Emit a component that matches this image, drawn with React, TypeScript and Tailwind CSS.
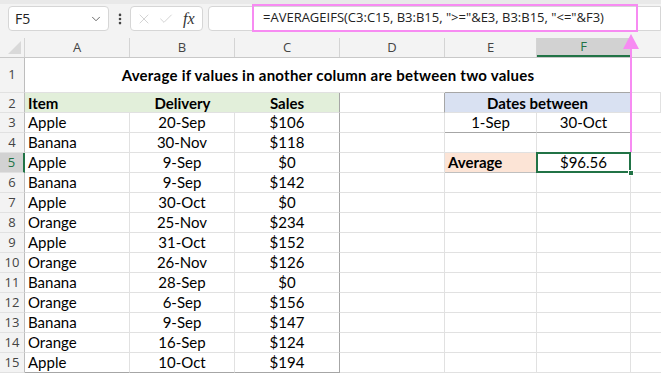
import React from 'react'
import { ChevronDown, EllipsisVertical, X, Check } from 'lucide-react'

const data = [
  ['Apple', '20-Sep', '$106'],
  ['Banana', '30-Nov', '$118'],
  ['Apple', '9-Sep', '$0'],
  ['Banana', '9-Sep', '$142'],
  ['Apple', '30-Oct', '$0'],
  ['Orange', '25-Nov', '$234'],
  ['Apple', '31-Oct', '$152'],
  ['Orange', '26-Nov', '$126'],
  ['Banana', '28-Sep', '$0'],
  ['Orange', '6-Sep', '$156'],
  ['Banana', '9-Sep', '$147'],
  ['Orange', '16-Sep', '$124'],
  ['Apple', '10-Oct', '$194'],
]

const RowHead = ({ n, active }: { n: number; active?: boolean }) => (
  <div
    className={
      active
        ? 'w-[25px] shrink-0 h-full flex items-center justify-center border-b border-[#e1e1e1] border-r-2 border-r-[#217346] bg-[#d2d2d2] text-[#217346] text-[13px] font-["Open_Sans",sans-serif]'
        : 'w-[25px] shrink-0 h-full flex items-center justify-center border-b border-[#e1e1e1] border-r border-r-[#bdbdbd] bg-[#f3f3f3] text-[#444] text-[13px] font-["Open_Sans",sans-serif]'
    }
  >
    {n}
  </div>
)

const Toolbar = () => (
  <div className="h-[38px] bg-[#f3f3f3] border-t-4 border-[#e9e9e9] flex items-start pt-[2px] pl-2 font-['Open_Sans',sans-serif]">
    <div className="w-[101px] h-[25px] bg-white border border-[#d6d6d6] rounded-[4px] flex items-center justify-between pl-[6px] pr-[5px]">
      <span className="text-[14px] text-[#222]">F5</span>
      <ChevronDown size={14} strokeWidth={1.5} className="text-[#555]" />
    </div>
    <div className="w-[21px] h-[25px] flex items-center justify-center">
      <EllipsisVertical size={14} strokeWidth={2.5} className="text-[#444]" />
    </div>
    <div className="w-[73px] h-[25px] bg-white border border-[#d6d6d6] rounded-[4px] flex items-center pl-[5px] gap-[6px]">
      <X size={16} strokeWidth={1} className="text-[#bdbdbd]" />
      <Check size={16} strokeWidth={1} className="text-[#bdbdbd]" />
      <span className="ml-[3px] text-[16px] italic text-[#333] font-['Liberation_Serif',serif]">fx</span>
    </div>
    <div className="ml-[5px] flex-1 h-[25px] bg-white border border-[#d6d6d6] rounded-l-[4px] flex items-center">
      <div className="ml-[43px] w-[386px] h-[28px] -mt-px border-2 border-[#f78bf2] flex items-center pl-[9px] text-[13px] text-[#222] whitespace-nowrap">
        =AVERAGEIFS(C3:C15, B3:B15, "&gt;="&amp;E3, B3:B15, "&lt;="&amp;F3)
      </div>
    </div>
  </div>
)

const ColHeads = () => (
  <div className="h-[20px] flex bg-[#f3f3f3] border-b border-[#c8c8c8] text-[13px] text-[#444] font-['Open_Sans',sans-serif]">
    <div className="w-[25px] shrink-0 border-r border-[#d4d4d4] relative">
      <div className="absolute right-[3px] bottom-[3px] w-0 h-0 border-l-[13px] border-l-transparent border-b-[13px] border-b-[#d9d9d9]" />
    </div>
    <div className="w-[105px] shrink-0 border-r border-[#d4d4d4] flex items-center justify-center">A</div>
    <div className="w-[105px] shrink-0 border-r border-[#d4d4d4] flex items-center justify-center">B</div>
    <div className="w-[105px] shrink-0 border-r border-[#d4d4d4] flex items-center justify-center">C</div>
    <div className="w-[105px] shrink-0 border-r border-[#d4d4d4] flex items-center justify-center">D</div>
    <div className="w-[92px] shrink-0 border-r border-[#d4d4d4] flex items-center justify-center">E</div>
    <div className="w-[94px] shrink-0 border-r border-[#d4d4d4] flex items-center justify-center bg-[#d2d2d2] text-[#217346] border-b-2 border-b-[#217346]">F</div>
    <div className="flex-1" />
  </div>
)

const Sheet = () => (
  <div className="font-['Lato',sans-serif] text-[15px] text-black">
    {/* row 1 */}
    <div className="h-[35px] flex">
      <RowHead n={1} />
      <div className="w-[606px] shrink-0 flex flex-col">
        <div className="flex-1 flex items-end justify-center pb-[7px] font-bold leading-[20px] tracking-[0.25px]">
          Average if values in another column are between two values
        </div>
        <div className="h-px flex">
          <div className="w-[420px] bg-[#e1e1e1]" />
          <div className="w-[186px] bg-[#a6a6a6]" />
        </div>
      </div>
      <div className="flex-1 border-b border-[#e1e1e1]" />
    </div>
    {/* row 2 */}
    <div className="h-[20px] flex leading-[20px]">
      <RowHead n={2} />
      <div className="w-[105px] shrink-0 bg-[#e2efda] border-b border-[#e1e1e1] pl-[3px] font-bold">Item</div>
      <div className="w-[105px] shrink-0 bg-[#e2efda] border-b border-[#e1e1e1] text-center font-bold">Delivery</div>
      <div className="w-[105px] shrink-0 bg-[#e2efda] border-b border-r border-[#e1e1e1] border-r-[#a6a6a6] text-center font-bold">Sales</div>
      <div className="w-[105px] shrink-0 border-b border-r border-[#e1e1e1] border-r-[#a6a6a6]" />
      <div className="w-[186px] shrink-0 bg-[#d9e1f2] border-r border-r-[#a6a6a6] border-b border-b-[#e1e1e1] text-center font-bold">Dates between</div>
      <div className="flex-1 border-b border-r border-[#e1e1e1]" />
    </div>
    {data.map((r, i) => {
      const n = i + 3
      const last = n === 15
      return (
        <div key={n} className="h-[20px] flex leading-[19px]">
          <RowHead n={n} active={n === 5} />
          <div className={last ? 'w-[105px] shrink-0 border-r border-r-[#e1e1e1] border-b border-b-[#a6a6a6] pl-[3px]' : 'w-[105px] shrink-0 border-r border-b border-[#e1e1e1] pl-[3px]'}>{r[0]}</div>
          <div className={last ? 'w-[105px] shrink-0 border-r border-r-[#e1e1e1] border-b border-b-[#a6a6a6] text-center' : 'w-[105px] shrink-0 border-r border-b border-[#e1e1e1] text-center'}>{r[1]}</div>
          <div className={last ? 'w-[105px] shrink-0 border-r border-b border-[#a6a6a6] text-center' : 'w-[105px] shrink-0 border-r border-r-[#a6a6a6] border-b border-b-[#e1e1e1] text-center'}>{r[2]}</div>
          <div className="w-[105px] shrink-0 border-r border-b border-[#e1e1e1]" />
          {n === 3 && (
            <>
              <div className="w-[92px] shrink-0 border-r border-r-[#e1e1e1] border-b border-b-[#a6a6a6] text-center">1-Sep</div>
              <div className="w-[94px] shrink-0 border-r border-b border-[#a6a6a6] text-center">30-Oct</div>
            </>
          )}
          {n === 5 && (
            <>
              <div className="w-[92px] shrink-0 bg-[#fce4d6] border-r border-b border-[#bfbfbf] pl-[3px] font-bold">Average</div>
              <div className="w-[94px] shrink-0 relative border-r border-b border-[#e1e1e1] text-center">
                $96.56
                <div className="absolute -left-px -top-px -right-px -bottom-px border-2 border-[#217346]" />
                <div className="absolute -right-[4px] -bottom-[4px] w-[6px] h-[6px] bg-[#217346] border border-white" />
              </div>
            </>
          )}
          {n !== 3 && n !== 5 && (
            <>
              <div className="w-[92px] shrink-0 border-r border-b border-[#e1e1e1]" />
              <div className="w-[94px] shrink-0 border-r border-b border-[#e1e1e1]" />
            </>
          )}
          <div className="flex-1 border-b border-[#e1e1e1]" />
        </div>
      )
    })}
  </div>
)

export default function App() {
  return (
    <div className="relative w-[661px] h-[374px] overflow-hidden bg-white">
      <Toolbar />
      <ColHeads />
      <Sheet />
      {/* pink arrow pointing at the formula */}
      <svg className="absolute left-[618px] top-[32px]" width="26" height="122" viewBox="0 0 26 122">
        <polygon points="13,2 5,17 21,17" fill="#f78bf2" />
        <rect x="12" y="15" width="2" height="105" fill="#f78bf2" />
      </svg>
    </div>
  )
}
